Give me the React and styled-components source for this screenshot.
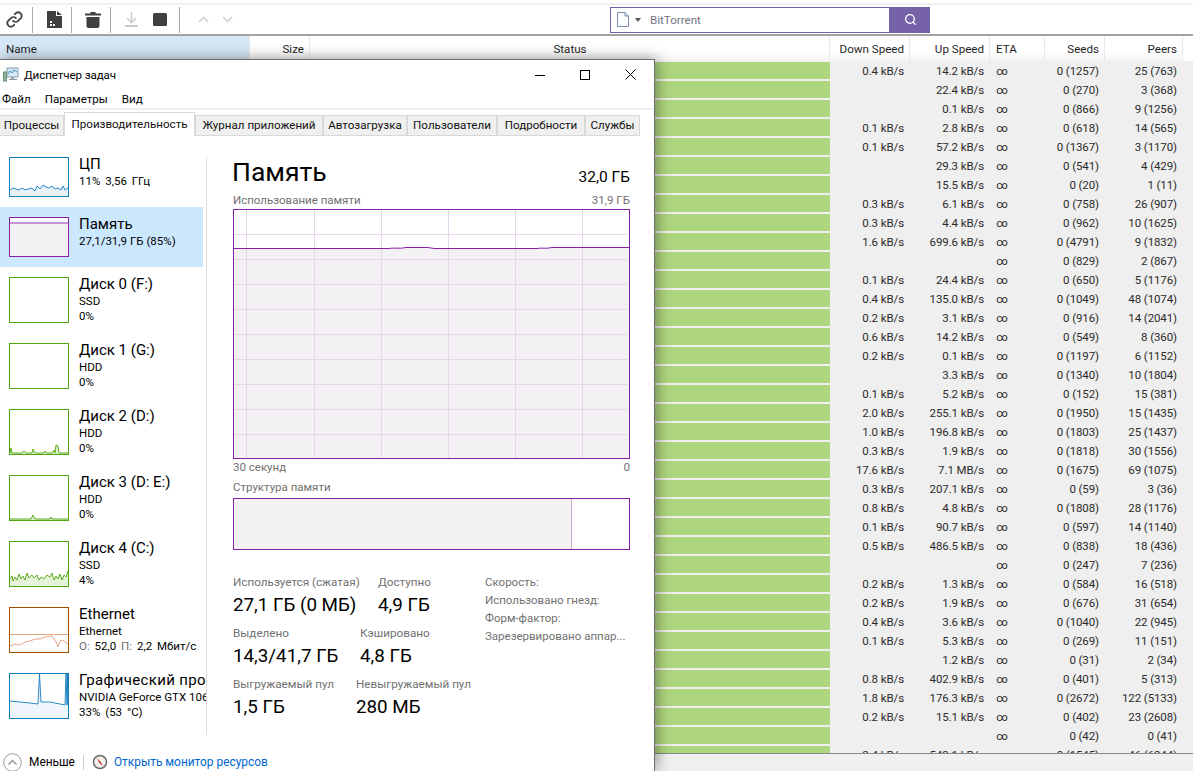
import styled, { createGlobalStyle } from "styled-components";
import { Search } from "lucide-react";

const GlobalStyle = createGlobalStyle`
  html, body {
    margin: 0;
    padding: 0;
    background: #fff;
    font-family: Roboto, "Noto Sans", sans-serif;
  }
  * { box-sizing: border-box; }
`;

const Page = styled.div`
  position: relative;
  width: 1193px;
  height: 771px;
  overflow: hidden;
  display: flex;
  flex-direction: column;
  background: #fff;
  color: #222;
  font-size: 11.6px;
`;

const TopStrip = styled.div`
  height: 5px;
  border-bottom: 2px solid #f0f0f0;
`;

const Toolbar = styled.div`
  height: 31px;
  display: flex;
  align-items: center;
  border-bottom: 2px solid #a3a3a3;
`;

const ToolIcon = styled.div`
  width: ${({ $w }) => $w}px;
  margin-left: ${({ $ml }) => $ml}px;
  display: flex;
  justify-content: center;
  align-items: center;
`;

const ToolSep = styled.div`
  width: 1px;
  height: 26px;
  background: #a8a8a8;
  margin-left: ${({ $ml }) => $ml}px;
`;

const SearchBox = styled.div`
  width: 280px;
  height: 26px;
  margin-left: ${({ $ml }) => $ml}px;
  border: 1px solid #7662a9;
  display: flex;
  align-items: center;
  padding-left: 6px;
  color: #75757f;
`;

const Caret = styled.span`
  width: 0;
  height: 0;
  border-left: 3px solid transparent;
  border-right: 3px solid transparent;
  border-top: 4px solid #555;
  margin: 0 9px 0 6px;
`;

const SearchButton = styled.div`
  width: 40px;
  height: 26px;
  background: #7662a9;
  color: #fff;
  display: flex;
  align-items: center;
  justify-content: center;
`;

const columns = "250px 60px 520px 80px 80px 55px 60px 78px 10px";

const HeaderRow = styled.div`
  height: 25px;
  display: grid;
  grid-template-columns: ${columns};
  background: #fff;
`;

const HeaderCell = styled.div`
  display: flex;
  align-items: center;
  padding: 0 5px 0 6px;
  border-right: 1px solid #e8e8e8;
  color: #1f1f1f;
  justify-content: ${({ $align }) => $align || "flex-end"};
  background: ${({ $active }) =>
    $active
      ? "#d5e7f6"
      : "linear-gradient(#fff 60%, #f4f4f4)"};
`;

const RowList = styled.div`
  height: 692px;
  overflow: hidden;
  background: #efefef;
  padding-top: 1px;
`;

const Row = styled.div`
  height: 19px;
  display: grid;
  grid-template-columns: ${columns};
  align-items: center;
  color: #2b2b2b;
  font-size: 11.5px;
  letter-spacing: -0.1px;
`;

const StatusBar = styled.div`
  grid-column: 1 / 4;
  height: 17px;
  margin-bottom: 2px;
  background: #aed67e;
`;

const NumCell = styled.div`
  text-align: ${({ $left }) => ($left ? "left" : "right")};
  padding: 0 6px;
  margin-bottom: 2px;
  white-space: nowrap;
`;

const BottomBar = styled.div`
  flex: 1;
  border-top: 1px solid #8a8a8a;
  background: #f0f0f0;
`;

/* task manager window sits over the torrent client */
const Window = styled.div`
  position: absolute;
  left: 0;
  top: 59px;
  width: 655px;
  height: 712px;
  background: #fff;
  border-top: 1px solid #6e6e6e;
  border-right: 1px solid #6e6e6e;
  box-shadow: 2px 0 14px rgba(0, 0, 0, 0.4);
  display: flex;
  flex-direction: column;
  color: #000;
`;

const TitleBar = styled.div`
  height: 29px;
  display: flex;
  align-items: center;
  padding-left: 3px;
  gap: 5px;
  position: relative;
  letter-spacing: -0.1px;
`;

const WindowControls = styled.div`
  margin-left: auto;
  display: flex;
  align-items: center;
  gap: 35px;
  padding-right: 18px;
`;

const MenuBar = styled.div`
  height: 19px;
  display: flex;
  align-items: center;
  padding-left: 2px;
  gap: 14px;
  border-bottom: 0;
`;

const MenuRule = styled.div`
  height: 2px;
  background: #f0f0f0;
`;

const TabStrip = styled.div`
  margin-top: 2px;
  height: 24px;
  display: flex;
  align-items: flex-end;
`;

const Tab = styled.div`
  width: ${({ $w }) => $w}px;
  height: ${({ $active }) => ($active ? 24 : 21)}px;
  border: 1px solid #d9d9d9;
  border-left: ${({ $first }) => ($first ? "0" : "1px solid #d9d9d9")};
  border-bottom: ${({ $active }) => ($active ? "0" : "1px solid #d9d9d9")};
  background: ${({ $active }) => ($active ? "#fff" : "#f0f0f0")};
  display: flex;
  justify-content: center;
  align-items: ${({ $active }) => ($active ? "flex-start" : "center")};
  padding-top: ${({ $active }) => ($active ? "4px" : "0")};
  padding-bottom: ${({ $active }) => ($active ? "0" : "2px")};
  white-space: nowrap;
  color: #111;
`;

const Body = styled.div`
  flex: 1;
  display: flex;
  min-height: 0;
`;

const SideList = styled.div`
  width: 206px;
  padding-top: 11px;
  overflow: hidden;
  flex: none;
`;

const SideItem = styled.div`
  width: 203px;
  height: ${({ $tall }) => ($tall ? 66 : 60)}px;
  padding: 10px 0 0 9px;
  display: flex;
  background: ${({ $selected }) => ($selected ? "#cce8ff" : "transparent")};
`;

const Thumb = styled.div`
  width: 60px;
  height: ${({ $tall }) => ($tall ? 46 : 40)}px;
  border: 1px solid ${({ $color }) => $color};
  background: #fff;
  flex: none;
`;

const SideText = styled.div`
  margin-left: 10px;
  margin-top: -3px;
  white-space: nowrap;
  line-height: 14.5px;
  font-size: 11.5px;
`;

const SideName = styled.div`
  font-size: 15px;
  line-height: 20px;
  letter-spacing: ${({ $spread }) => ($spread ? "0.35px" : "0")};
`;

const SideNote = styled.span`
  word-spacing: 2px;
`;

const SideMuted = styled.span`
  color: #6d6d6d;
`;

const SideRule = styled.div`
  width: 1px;
  height: 578px;
  margin-top: 21px;
  background: #dcdcdc;
  flex: none;
`;

const Main = styled.div`
  margin-left: 25px;
  width: 398px;
  padding-top: 19px;
`;

const HeadLine = styled.div`
  display: flex;
  justify-content: space-between;
  align-items: flex-end;
  height: 34px;
`;

const BigTitle = styled.div`
  font-size: 26.5px;
  line-height: 34px;
`;

const Capacity = styled.div`
  font-size: 15.5px;
  line-height: 24px;
`;

const LabelRow = styled.div`
  display: flex;
  justify-content: space-between;
  color: #717171;
  font-size: 11.5px;
  line-height: 17px;
  margin-left: 1px;
  margin-top: ${({ $mt }) => $mt || 0}px;
`;

const ChartFrame = styled.div`
  margin-left: 1px;
  width: 397px;
  height: 250px;
  border: 1px solid #8b1ea8;
  background: #fff;
`;

const CompBar = styled.div`
  margin: 2px 0 0 1px;
  width: 397px;
  height: 52px;
  border: 1px solid #8b1ea8;
  display: flex;
`;

const CompUsed = styled.div`
  width: 338px;
  background: #f3f1f4;
  border-right: 1px solid #c4a9d2;
`;

const StatsArea = styled.div`
  display: flex;
  margin: 23px 0 0 1px;
`;

const StatsColumn = styled.div`
  width: 252px;
  flex: none;
`;

const StatRow = styled.div`
  display: flex;
  height: 51px;
`;

const StatCell = styled.div`
  width: ${({ $w }) => $w}px;
  flex: none;
  white-space: nowrap;
`;

const StatLabel = styled.div`
  color: #717171;
  font-size: 11.7px;
  line-height: 18px;
`;

const StatValue = styled.div`
  font-size: 18.8px;
  line-height: 28px;
`;

const SpecList = styled.div`
  color: #717171;
  font-size: 11.5px;
  line-height: 18px;
  white-space: nowrap;
`;

const Footer = styled.div`
  height: 18px;
  display: flex;
  align-items: center;
  padding-left: 3px;
  flex: none;
  font-size: 11.9px;
`;

const FooterSep = styled.div`
  width: 1px;
  height: 15px;
  background: #ccc;
  margin: 0 8px;
`;

const LinkText = styled.span`
  color: #0066cc;
  margin-left: 6px;
`;

const LessText = styled.span`
  margin-left: 7px;
`;

const rows = [
  ["0.4 kB/s", "14.2 kB/s", "0 (1257)", "25 (763)"],
  ["", "22.4 kB/s", "0 (270)", "3 (368)"],
  ["", "0.1 kB/s", "0 (866)", "9 (1256)"],
  ["0.1 kB/s", "2.8 kB/s", "0 (618)", "14 (565)"],
  ["0.1 kB/s", "57.2 kB/s", "0 (1367)", "3 (1170)"],
  ["", "29.3 kB/s", "0 (541)", "4 (429)"],
  ["", "15.5 kB/s", "0 (20)", "1 (11)"],
  ["0.3 kB/s", "6.1 kB/s", "0 (758)", "26 (907)"],
  ["0.3 kB/s", "4.4 kB/s", "0 (962)", "10 (1625)"],
  ["1.6 kB/s", "699.6 kB/s", "0 (4791)", "9 (1832)"],
  ["", "", "0 (829)", "2 (867)"],
  ["0.1 kB/s", "24.4 kB/s", "0 (650)", "5 (1176)"],
  ["0.4 kB/s", "135.0 kB/s", "0 (1049)", "48 (1074)"],
  ["0.2 kB/s", "3.1 kB/s", "0 (916)", "14 (2041)"],
  ["0.6 kB/s", "14.2 kB/s", "0 (549)", "8 (360)"],
  ["0.2 kB/s", "0.1 kB/s", "0 (1197)", "6 (1152)"],
  ["", "3.3 kB/s", "0 (1340)", "10 (1804)"],
  ["0.1 kB/s", "5.2 kB/s", "0 (152)", "15 (381)"],
  ["2.0 kB/s", "255.1 kB/s", "0 (1950)", "15 (1435)"],
  ["1.0 kB/s", "196.8 kB/s", "0 (1803)", "25 (1437)"],
  ["0.3 kB/s", "1.9 kB/s", "0 (1818)", "30 (1556)"],
  ["17.6 kB/s", "7.1 MB/s", "0 (1675)", "69 (1075)"],
  ["0.3 kB/s", "207.1 kB/s", "0 (59)", "3 (36)"],
  ["0.8 kB/s", "4.8 kB/s", "0 (1808)", "28 (1176)"],
  ["0.1 kB/s", "90.7 kB/s", "0 (597)", "14 (1140)"],
  ["0.5 kB/s", "486.5 kB/s", "0 (838)", "18 (436)"],
  ["", "", "0 (247)", "7 (236)"],
  ["0.2 kB/s", "1.3 kB/s", "0 (584)", "16 (518)"],
  ["0.2 kB/s", "1.9 kB/s", "0 (676)", "31 (654)"],
  ["0.4 kB/s", "3.6 kB/s", "0 (1040)", "22 (945)"],
  ["0.1 kB/s", "5.3 kB/s", "0 (269)", "11 (151)"],
  ["", "1.2 kB/s", "0 (31)", "2 (34)"],
  ["0.8 kB/s", "402.9 kB/s", "0 (401)", "5 (313)"],
  ["1.8 kB/s", "176.3 kB/s", "0 (2672)", "122 (5133)"],
  ["0.2 kB/s", "15.1 kB/s", "0 (402)", "23 (2608)"],
  ["", "", "0 (42)", "0 (41)"],
  ["2.4 kB/s", "543.1 kB/s", "0 (1545)", "46 (6244)"],
];

const tabs = [
  ["Процессы", 64],
  ["Производительность", 131, true],
  ["Журнал приложений", 128],
  ["Автозагрузка", 84],
  ["Пользователи", 90],
  ["Подробности", 88],
  ["Службы", 55],
];

const GREEN = "#4ea60c";
const BLUE = "#117dbb";
const ORANGE = "#a74f01";

const sideItems = [
  {
    name: "Диск 0 (F:)", l1: "SSD", l2: "0%", color: GREEN,
  },
  {
    name: "Диск 1 (G:)", l1: "HDD", l2: "0%", color: GREEN,
  },
  {
    name: "Диск 2 (D:)", l1: "HDD", l2: "0%", color: GREEN,
    fill: "#dff0d0",
    line: "0,43 1,38 2,43 12,43 14,41 16,43 22,43 23,39 25,43 34,43 35,41 37,43 42,43 44,40 45,43 46,35 48,36 49,43 58,43",
  },
  {
    name: "Диск 3 (D: E:)", l1: "HDD", l2: "0%", color: GREEN,
    fill: "#dff0d0",
    line: "0,43 21,43 23,39 25,43 40,43 41,41 42,43 58,43",
  },
  {
    name: "Диск 4 (C:)", l1: "SSD", l2: "4%", color: GREEN,
    fill: "#e6f3da",
    line: "0,37 2,34 3,39 5,35 7,38 9,32 11,37 13,34 15,38 17,31 19,36 22,33 24,36 27,33 29,38 31,35 34,37 37,33 40,35 42,31 44,38 46,34 48,37 50,32 52,38 54,33 56,35 58,29",
  },
];

function Spark({ line, fill, stroke, extra, h = 44 }) {
  const area = `0,${h} ${line} 58,${h}`;
  return (
    <svg width="58" height={h} viewBox={`0 0 58 ${h}`} style={{ display: "block" }}>
      {extra}
      <polygon points={area} fill={fill} />
      <polyline points={line} fill="none" stroke={stroke} strokeWidth="0.9" />
    </svg>
  );
}

function MemoryChart() {
  const vLines = [12.5, 80.5, 147.5, 214.5, 281.5, 348.5];
  const hLines = [24.5, 49.5, 74.5, 99.5, 124.5, 149.5, 174.5, 199.5, 224.5];
  const top =
    "M0 38.5 L154 38.5 C160 37.5 166 39 172 37.5 L194 37.5 L200 38.5 L303 38.5 C308 37.5 312 39 318 37.5 L395 37.5";
  return (
    <svg width="395" height="248" viewBox="0 0 395 248" style={{ display: "block" }}>
      <path d={`${top} L395 248 L0 248 Z`} fill="#f3f1f4" />
      {vLines.map((x) => (
        <line key={x} x1={x} x2={x} y1="0" y2="248" stroke="#e6d6ec" />
      ))}
      {hLines.map((y) => (
        <line key={y} x1="0" x2="393" y1={y} y2={y} stroke="#e6d6ec" />
      ))}
      <path d={top} fill="none" stroke="#8b1ea8" />
    </svg>
  );
}

function TaskManagerIcon() {
  return (
    <svg width="16" height="15" viewBox="0 0 16 15">
      <rect x="4" y="1" width="11" height="9" fill="#d4e9f7" stroke="#8aa0ae" />
      <polyline points="5,7 7,4 9,6 11,3 14,5" fill="none" stroke="#3d8fc4" />
      <rect x="8" y="10" width="3" height="2" fill="#9aa5ab" />
      <rect x="6" y="12" width="8" height="1" fill="#8d979d" />
      <rect x="0.5" y="5" width="3" height="9" fill="#8fb89a" stroke="#6c8a75" />
    </svg>
  );
}

function ResourceIcon() {
  return (
    <svg width="16" height="16" viewBox="0 0 16 16">
      <circle cx="8" cy="8" r="6.5" fill="#f5f2ee" stroke="#6b6f70" strokeWidth="1.6" />
      <path d="M5 4 L9 8.5 L11 12.5 L7 8.5 Z" fill="#c8281e" />
    </svg>
  );
}

export default function App() {
  return (
    <Page>
      <GlobalStyle />
      <TopStrip />
      <Toolbar>
        <ToolIcon $w={18} $ml={5}>
          <svg width="17" height="17" viewBox="0 0 24 24" fill="none" stroke="#444" strokeWidth="2.6" strokeLinecap="round">
            <path d="M10 14a5 5 0 0 0 7 0l4-4a5 5 0 0 0-7-7l-1.5 1.5" />
            <path d="M14 10a5 5 0 0 0-7 0l-4 4a5 5 0 0 0 7 7l1.5-1.5" />
          </svg>
        </ToolIcon>
        <ToolSep $ml={9} />
        <ToolIcon $w={16} $ml={13}>
          <svg width="15" height="17" viewBox="0 0 15 17">
            <path d="M0 0 H9 V5 H15 V17 H0 Z M10 0 L15 4 H10 Z" fill="#3f3f3f" />
            <rect x="3" y="10" width="2" height="2" fill="#fff" />
            <rect x="6" y="13" width="2" height="2" fill="#fff" />
            <rect x="3" y="13" width="2" height="2" fill="#fff" />
          </svg>
        </ToolIcon>
        <ToolSep $ml={9} />
        <ToolIcon $w={16} $ml={13}>
          <svg width="16" height="16" viewBox="0 0 16 16">
            <path d="M5.5 0 H10.5 V1.5 H16 V3.5 H0 V1.5 H5.5 Z" fill="#3f3f3f" />
            <path d="M1.5 5 H14.5 V14 Q14.5 16 12.5 16 H3.5 Q1.5 16 1.5 14 Z" fill="#3f3f3f" />
          </svg>
        </ToolIcon>
        <ToolSep $ml={9} />
        <ToolIcon $w={16} $ml={12}>
          <svg width="15" height="15" viewBox="0 0 15 15" fill="none" stroke="#c9c9c9" strokeWidth="1.4">
            <path d="M7.5 0 V10 M3 6 L7.5 10.5 L12 6" />
            <path d="M1 14 H14" strokeWidth="2" />
          </svg>
        </ToolIcon>
        <ToolIcon $w={16} $ml={13}>
          <svg width="14" height="13" viewBox="0 0 14 13">
            <rect width="14" height="13" rx="1.5" fill="#3f3f3f" />
          </svg>
        </ToolIcon>
        <ToolSep $ml={11} />
        <ToolIcon $w={12} $ml={17}>
          <svg width="11" height="7" viewBox="0 0 11 7" fill="none" stroke="#d0d0d0" strokeWidth="1.6">
            <path d="M1 6 L5.5 1.5 L10 6" />
          </svg>
        </ToolIcon>
        <ToolIcon $w={12} $ml={12}>
          <svg width="11" height="7" viewBox="0 0 11 7" fill="none" stroke="#d0d0d0" strokeWidth="1.6">
            <path d="M1 1 L5.5 5.5 L10 1" />
          </svg>
        </ToolIcon>
        <SearchBox $ml={377}>
          <svg width="12" height="15" viewBox="0 0 12 15">
            <path d="M.5.5 H8 L11.5 4 V14.5 H.5 Z" fill="#fbfcfd" stroke="#7d8ea3" />
            <path d="M8 .5 V4 H11.5" fill="#dbe3ec" stroke="#7d8ea3" />
          </svg>
          <Caret />
          BitTorrent
        </SearchBox>
        <SearchButton>
          <Search size={13} strokeWidth={2.4} />
        </SearchButton>
      </Toolbar>

      <HeaderRow>
        <HeaderCell $active $align="flex-start">Name</HeaderCell>
        <HeaderCell>Size</HeaderCell>
        <HeaderCell $align="center">Status</HeaderCell>
        <HeaderCell>Down Speed</HeaderCell>
        <HeaderCell>Up Speed</HeaderCell>
        <HeaderCell $align="flex-start">ETA</HeaderCell>
        <HeaderCell>Seeds</HeaderCell>
        <HeaderCell>Peers</HeaderCell>
      </HeaderRow>

      <RowList>
        {rows.map((r, i) => (
          <Row key={i}>
            <StatusBar />
            <NumCell>{r[0]}</NumCell>
            <NumCell>{r[1]}</NumCell>
            <NumCell $left>∞</NumCell>
            <NumCell>{r[2]}</NumCell>
            <NumCell>{r[3]}</NumCell>
          </Row>
        ))}
      </RowList>
      <BottomBar />

      <Window>
        <TitleBar>
          <TaskManagerIcon />
          Диспетчер задач
          <WindowControls>
            <svg width="10" height="10" viewBox="0 0 10 10" stroke="#000">
              <path d="M0 5.5 H10" />
            </svg>
            <svg width="10" height="10" viewBox="0 0 10 10" fill="none" stroke="#000">
              <rect x=".5" y=".5" width="9" height="9" />
            </svg>
            <svg width="11" height="11" viewBox="0 0 11 11" stroke="#000">
              <path d="M.5.5 L10.5 10.5 M10.5.5 L.5 10.5" />
            </svg>
          </WindowControls>
        </TitleBar>
        <MenuBar>
          <span>Файл</span>
          <span>Параметры</span>
          <span>Вид</span>
        </MenuBar>
        <MenuRule />
        <TabStrip>
          {tabs.map(([label, w, active], i) => (
            <Tab key={label} $w={w} $active={active} $first={i === 0}>
              {label}
            </Tab>
          ))}
        </TabStrip>

        <Body>
          <SideList>
            <SideItem>
              <Thumb $color={BLUE}>
                <Spark
                  h={38}
                  stroke={BLUE}
                  fill="#e8f2f9"
                  line="0,32 3,30 6,31 9,32 12,30 15,32 18,31 22,30 25,33 27,28 30,31 33,27 36,29 39,30 42,28 45,31 48,30 51,32 53,28 55,32 58,30"
                />
              </Thumb>
              <SideText>
                <SideName>ЦП</SideName>
                <SideNote>11% 3,56 ГГц</SideNote>
              </SideText>
            </SideItem>
            <SideItem $selected>
              <Thumb $color="#8b1ea8">
                <Spark h={38} stroke="#8b1ea8" fill="#f3f1f4" line="0,5 58,5" />
              </Thumb>
              <SideText>
                <SideName>Память</SideName>
                27,1/31,9 ГБ (85%)
              </SideText>
            </SideItem>
            {sideItems.map((it) => (
              <SideItem key={it.name} $tall>
                <Thumb $tall $color={it.color}>
                  {it.line && <Spark stroke={it.color} fill={it.fill} line={it.line} />}
                </Thumb>
                <SideText>
                  <SideName>{it.name}</SideName>
                  {it.l1}
                  <br />
                  {it.l2}
                </SideText>
              </SideItem>
            ))}
            <SideItem $tall>
              <Thumb $tall $color={ORANGE}>
                <Spark
                  stroke="#e59a78"
                  fill="#fff"
                  line="0,38 5,36 10,37 15,34 20,33 25,31 30,31 35,29 42,28 46,34 48,39 50,33 53,32 55,34 58,36"
                  extra={<line x1="0" x2="58" y1="26.5" y2="26.5" stroke="#e3a47f" />}
                />
              </Thumb>
              <SideText>
                <SideName>Ethernet</SideName>
                Ethernet
                <br />
                <SideNote>
                  <SideMuted>О:</SideMuted> 52,0 <SideMuted>П:</SideMuted> 2,2 Мбит/с
                </SideNote>
              </SideText>
            </SideItem>
            <SideItem $tall>
              <Thumb $tall $color={BLUE}>
                <Spark
                  stroke={BLUE}
                  fill="#f0f6fb"
                  line="0,27 10,28 20,29 28,30 29.5,0 31,28 40,28 45,29 55,31 56,0 57,31 57.5,0 58,31"
                />
              </Thumb>
              <SideText>
                <SideName $spread>Графический процессор</SideName>
                NVIDIA GeForce GTX 1060
                <br />
                <SideNote>33% (53 °C)</SideNote>
              </SideText>
            </SideItem>
          </SideList>
          <SideRule />

          <Main>
            <HeadLine>
              <BigTitle>Память</BigTitle>
              <Capacity>32,0 ГБ</Capacity>
            </HeadLine>
            <LabelRow $mt={3}>
              <span>Использование памяти</span>
              <span>31,9 ГБ</span>
            </LabelRow>
            <ChartFrame>
              <MemoryChart />
            </ChartFrame>
            <LabelRow>
              <span>30 секунд</span>
              <span>0</span>
            </LabelRow>
            <LabelRow $mt={3}>
              <span>Структура памяти</span>
            </LabelRow>
            <CompBar>
              <CompUsed />
            </CompBar>
            <StatsArea>
              <StatsColumn>
                <StatRow>
                  <StatCell $w={145}>
                    <StatLabel>Используется (сжатая)</StatLabel>
                    <StatValue>27,1 ГБ (0 МБ)</StatValue>
                  </StatCell>
                  <StatCell $w={100}>
                    <StatLabel>Доступно</StatLabel>
                    <StatValue>4,9 ГБ</StatValue>
                  </StatCell>
                </StatRow>
                <StatRow>
                  <StatCell $w={127}>
                    <StatLabel>Выделено</StatLabel>
                    <StatValue>14,3/41,7 ГБ</StatValue>
                  </StatCell>
                  <StatCell $w={100}>
                    <StatLabel>Кэшировано</StatLabel>
                    <StatValue>4,8 ГБ</StatValue>
                  </StatCell>
                </StatRow>
                <StatRow>
                  <StatCell $w={123}>
                    <StatLabel>Выгружаемый пул</StatLabel>
                    <StatValue>1,5 ГБ</StatValue>
                  </StatCell>
                  <StatCell $w={120}>
                    <StatLabel>Невыгружаемый пул</StatLabel>
                    <StatValue>280 МБ</StatValue>
                  </StatCell>
                </StatRow>
              </StatsColumn>
              <SpecList>
                <div>Скорость:</div>
                <div>Использовано гнезд:</div>
                <div>Форм-фактор:</div>
                <div>Зарезервировано аппар...</div>
              </SpecList>
            </StatsArea>
          </Main>
        </Body>

        <Footer>
          <svg width="19" height="19" viewBox="0 0 19 19" fill="none" stroke="#9a9a9a">
            <circle cx="9.5" cy="9.5" r="8.8" />
            <path d="M5.5 11.5 L9.5 7.5 L13.5 11.5" strokeWidth="1.5" />
          </svg>
          <LessText>Меньше</LessText>
          <FooterSep />
          <ResourceIcon />
          <LinkText>Открыть монитор ресурсов</LinkText>
        </Footer>
      </Window>
    </Page>
  );
}
